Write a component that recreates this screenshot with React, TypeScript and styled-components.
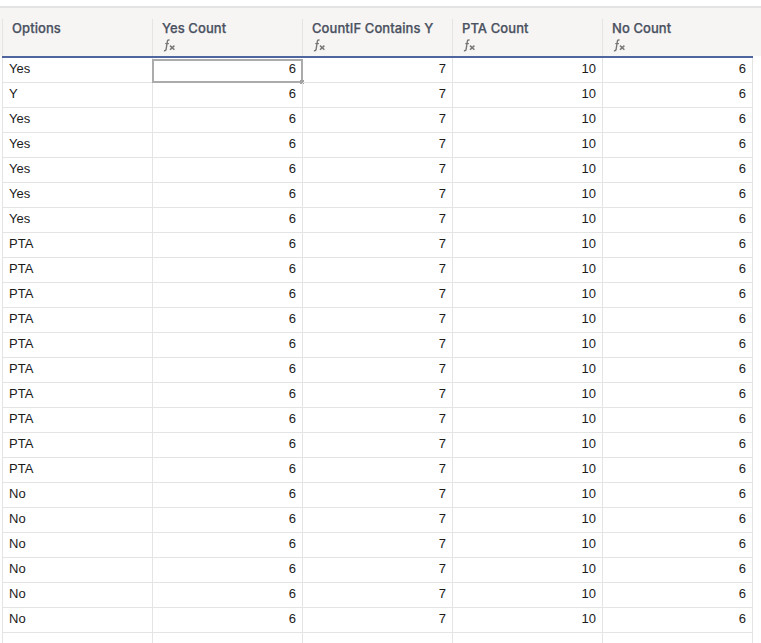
import React from "react";
import styled, { createGlobalStyle } from "styled-components";

const Global = createGlobalStyle`
  html, body {
    margin: 0;
    padding: 0;
    height: 100%;
    overflow: hidden;
    background: #fff;
  }
`;

const Page = styled.div`
  width: 761px;
  height: 643px;
  overflow: hidden;
  padding-top: 6px;
  box-sizing: border-box;
`;

const TopRule = styled.div`
  height: 2px;
  background: #e3e3e3;
`;

const Header = styled.div`
  display: flex;
  height: 48px;
  padding: 11px 0 0 2px;
  box-sizing: border-box;
  background: #f7f5f3;
`;

const HeaderCell = styled.div`
  width: 150px;
  flex: none;
  box-sizing: border-box;
  padding: 1px 0 0 9px;
  border-left: 1px solid #e6e4e2;
`;

const HeaderLabel = styled.div`
  font-family: Inter, "Liberation Sans", sans-serif;
  font-size: 13px;
  font-weight: 500;
  line-height: 16px;
  letter-spacing: 0.08px;
  color: #4a5161;
  -webkit-text-stroke: 0.25px #4a5161;
`;

const Fx = styled.svg`
  display: block;
  width: 13px;
  height: 13px;
  margin: 3px 0 0 1px;
  color: #777775;
`;

const Body = styled.div`
  width: 751px;
  margin-left: 2px;
  border-top: 2px solid #4f659f;
`;

const Row = styled.div`
  display: flex;
  height: 25px;
`;

const Cell = styled.div<{ $first?: boolean; $numeric?: boolean; $selected?: boolean }>`
  position: relative;
  flex: none;
  width: ${(p) => (p.$first ? "151px" : "150px")};
  height: 25px;
  box-sizing: border-box;
  padding: ${(p) => (p.$first ? "0 0 0 6px" : "0 6px 0 0")};
  border-left: ${(p) => (p.$first ? "1px solid #e4e4e4" : "none")};
  border-right: 1px solid #e4e4e4;
  border-bottom: 1px solid #e4e4e4;
  text-align: ${(p) => (p.$numeric ? "right" : "left")};
  font-family: "Liberation Sans", Arial, sans-serif;
  font-size: 13px;
  line-height: 21px;
  color: #1b1b1b;
  ${(p) =>
    p.$selected &&
    `
    margin: 1px 0 0 -1px;
    width: 151px;
    height: 24px;
    padding: 0 5px 0 0;
    border: 2px solid #ababab;
    line-height: 15px;
  `}
`;

const Handle = styled.span`
  position: absolute;
  right: -3px;
  bottom: -3px;
  width: 4px;
  height: 4px;
  background: #a3a3a3;
`;

const columns = ["Options", "Yes Count", "CountIF Contains Y", "PTA Count", "No Count"];

const options = [
  "Yes", "Y", "Yes", "Yes", "Yes", "Yes", "Yes",
  "PTA", "PTA", "PTA", "PTA", "PTA", "PTA", "PTA", "PTA", "PTA", "PTA",
  "No", "No", "No", "No", "No", "No", "",
];

const FxIcon = () => (
  <Fx viewBox="0 0 13 13" fill="none" stroke="currentColor">
    <path d="M6.6 1.1C5.2.6 4.5 1.3 4.3 2.6L3.2 9.8C3 11.3 2.3 12 .9 11.6" strokeWidth="1.4" />
    <path d="M2.2 4.6H6" strokeWidth="1.1" />
    <path d="M7 6.6L11.4 10.8M11.4 6.6L7 10.8" strokeWidth="1.5" />
  </Fx>
);

const App = () => {
  return (
    <Page>
      <Global />
      <TopRule />
      <Header>
        {columns.map((name, i) => (
          <HeaderCell key={name}>
            <HeaderLabel>{name}</HeaderLabel>
            {i > 0 && <FxIcon />}
          </HeaderCell>
        ))}
      </Header>
      <Body>
        {options.map((opt, i) => {
          const filled = opt !== "";
          return (
            <Row key={i}>
              <Cell $first>{opt}</Cell>
              <Cell $numeric $selected={i === 0}>
                {filled && 6}
                {i === 0 && <Handle />}
              </Cell>
              <Cell $numeric>{filled && 7}</Cell>
              <Cell $numeric>{filled && 10}</Cell>
              <Cell $numeric>{filled && 6}</Cell>
            </Row>
          );
        })}
      </Body>
    </Page>
  );
};

export default App;
